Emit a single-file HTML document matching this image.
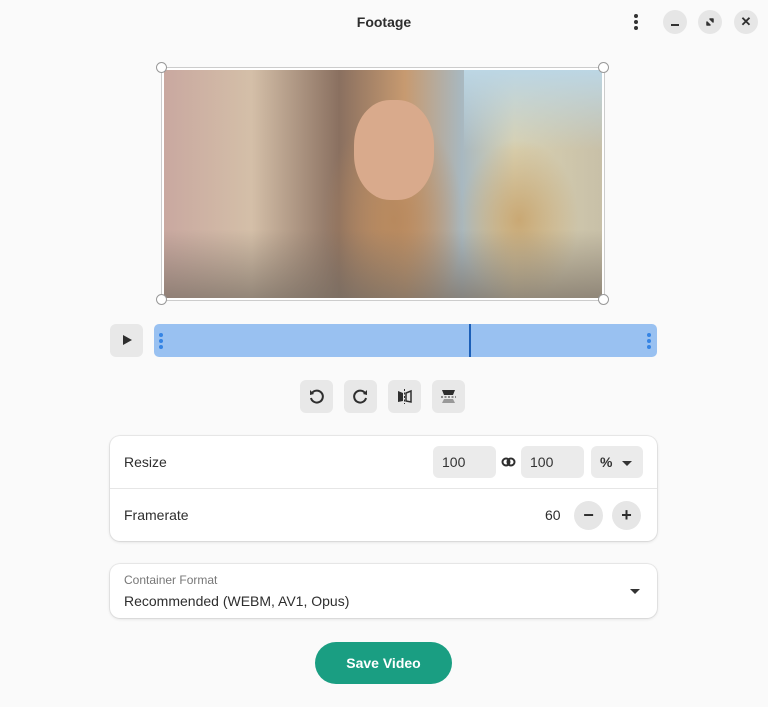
<!DOCTYPE html>
<html><head><style>
body{margin:0;width:768px;height:707px;background:#fafafa;font-family:"Liberation Sans",sans-serif;color:#2e2e2e;position:relative;overflow:hidden}
.a{position:absolute}
.btn{position:absolute;background:#e8e8e8;border-radius:6px}
.circ{position:absolute;width:24px;height:24px;border-radius:50%;background:#e6e6e6;font-size:13px;font-weight:bold;text-align:center;line-height:24px}
.card{position:absolute;background:#fff;border-radius:10px;box-shadow:0 0 0 1px rgba(0,0,0,.06),0 1px 3px rgba(0,0,0,.12)}
.field{position:absolute;background:#ebebeb;border-radius:6px;font-size:14px;line-height:32px;padding-left:9px;box-sizing:border-box;color:#333}
.h{position:absolute;width:11px;height:11px;border-radius:50%;background:#fff;border:1px solid #999;box-sizing:border-box}
</style></head><body>
<div class="a" style="left:0;width:768px;top:14px;text-align:center;font-weight:bold;font-size:14px">Footage</div>
<div class="a" style="left:634px;top:14px;width:4px">
<div style="width:4px;height:4px;border-radius:2px;background:#333;margin-bottom:2px"></div>
<div style="width:4px;height:4px;border-radius:2px;background:#333;margin-bottom:2px"></div>
<div style="width:4px;height:4px;border-radius:2px;background:#333"></div></div>
<div class="circ" style="left:663px;top:10px"><div style="width:8px;height:2px;background:#333;margin:14px auto 0"></div></div>
<div class="circ" style="left:698px;top:10px"><svg width="24" height="24"><path d="M12 9h3v3zM12 15h-3v-3z" fill="#333" stroke="#333" stroke-width="1.5" stroke-linejoin="round"/></svg></div>
<div class="circ" style="left:734px;top:10px">✕</div>

<div class="a" style="left:162px;top:68px;width:442px;height:232px;border:2px solid #fff;box-sizing:border-box;box-shadow:0 0 0 1px #ccc;overflow:hidden;
background:linear-gradient(180deg,rgba(0,0,0,0) 70%,rgba(120,110,100,.7) 100%),radial-gradient(ellipse 60px 80px at 355px 150px,#c9a874,transparent),radial-gradient(ellipse 70px 110px at 230px 150px,#b8895e,transparent),linear-gradient(90deg,#c9a8a0 0%,#d4bfa8 20%,#8a7060 40%,#c79a70 55%,#a8b8c0 68%,#d8d0b0 80%,#c8c0a8 100%)">
<div class="a" style="left:300px;top:0;width:142px;height:80px;background:linear-gradient(180deg,#bcd6e4,rgba(200,220,230,0))"></div>
<div class="a" style="left:190px;top:30px;width:80px;height:100px;border-radius:45%;background:#d9aa8c"></div>
</div>
<div class="h" style="left:156px;top:62px"></div><div class="h" style="left:598px;top:62px"></div>
<div class="h" style="left:156px;top:294px"></div><div class="h" style="left:598px;top:294px"></div>

<div class="btn" style="left:110px;top:324px;width:33px;height:33px"><div style="position:absolute;left:13px;top:11px;border-left:9px solid #2e2e2e;border-top:5.5px solid transparent;border-bottom:5.5px solid transparent"></div></div>
<div class="a" style="left:154px;top:324px;width:503px;height:33px;background:#99c1f1;border-radius:5px"></div>
<div class="a" style="left:469px;top:324px;width:2px;height:33px;background:#1c5fb8"></div>
<div class="a" style="left:159px;top:333px;width:4px"><div style="width:4px;height:4px;border-radius:2px;background:#3584e4;margin-bottom:2px"></div><div style="width:4px;height:4px;border-radius:2px;background:#3584e4;margin-bottom:2px"></div><div style="width:4px;height:4px;border-radius:2px;background:#3584e4"></div></div>
<div class="a" style="left:647px;top:333px;width:4px"><div style="width:4px;height:4px;border-radius:2px;background:#3584e4;margin-bottom:2px"></div><div style="width:4px;height:4px;border-radius:2px;background:#3584e4;margin-bottom:2px"></div><div style="width:4px;height:4px;border-radius:2px;background:#3584e4"></div></div>

<div class="btn" style="left:300px;top:380px;width:33px;height:33px"><svg width="33" height="33"><path d="M12 13 A6 6 0 1 1 11 18" fill="none" stroke="#2e2e2e" stroke-width="2"/><path d="M10 10 L14 14 L10 15Z" fill="#2e2e2e"/></svg></div>
<div class="btn" style="left:344px;top:380px;width:33px;height:33px"><svg width="33" height="33"><path d="M21 13 A6 6 0 1 0 22 18" fill="none" stroke="#2e2e2e" stroke-width="2"/><path d="M23 10 L19 14 L23 15Z" fill="#2e2e2e"/></svg></div>
<div class="btn" style="left:388px;top:380px;width:33px;height:33px"><svg width="33" height="33"><path d="M10 11 L15 13 V21 L10 22Z" fill="#2e2e2e"/><path d="M23 11 L18 13 V21 L23 22Z" fill="none" stroke="#2e2e2e" stroke-width="1.5"/><path d="M16.5 9V24" stroke="#2e2e2e" stroke-dasharray="2 1.5"/></svg></div>
<div class="btn" style="left:432px;top:380px;width:33px;height:33px"><svg width="33" height="33"><path d="M10 10 H23 L21 15 H12Z" fill="#2e2e2e"/><path d="M12 19 H21 L23 23 H10Z" fill="#999"/><path d="M9 17H24" stroke="#2e2e2e" stroke-dasharray="2 1.5"/></svg></div>

<div class="card" style="left:110px;top:436px;width:547px;height:105px">
<div class="a" style="left:0;right:0;top:52px;height:1px;background:#e6e6e6"></div>
<div class="a" style="left:14px;top:18px;font-size:14px">Resize</div>
<div class="field" style="left:323px;top:10px;width:63px;height:32px">100</div>
<svg class="a" style="left:390px;top:20px" width="18" height="12"><circle cx="6" cy="6" r="3.5" fill="none" stroke="#2e2e2e" stroke-width="2"/><circle cx="11" cy="6" r="3.5" fill="none" stroke="#2e2e2e" stroke-width="2"/></svg>
<div class="field" style="left:411px;top:10px;width:63px;height:32px">100</div>
<div class="field" style="left:481px;top:10px;width:52px;height:32px;font-weight:bold">% <span style="display:inline-block;margin-left:6px;border-top:5px solid #333;border-left:5px solid transparent;border-right:5px solid transparent;vertical-align:middle"></span></div>
<div class="a" style="left:14px;top:71px;font-size:14px">Framerate</div>
<div class="a" style="left:435px;top:71px;font-size:14px">60</div>
<div class="circ" style="left:464px;top:65px;width:29px;height:29px;line-height:29px;font-size:18px">−</div>
<div class="circ" style="left:502px;top:65px;width:29px;height:29px;line-height:29px;font-size:18px">+</div>
</div>

<div class="card" style="left:110px;top:564px;width:547px;height:54px">
<div class="a" style="left:14px;top:9px;font-size:12px;color:#777">Container Format</div>
<div class="a" style="left:14px;top:29px;font-size:14px">Recommended (WEBM, AV1, Opus)</div>
<div class="a" style="left:520px;top:25px;border-top:5px solid #333;border-left:5px solid transparent;border-right:5px solid transparent"></div>
</div>

<div class="a" style="left:315px;top:642px;width:137px;height:42px;border-radius:21px;background:#1a9e82;color:#fff;font-weight:bold;font-size:14px;text-align:center;line-height:42px">Save Video</div>
</body></html>
